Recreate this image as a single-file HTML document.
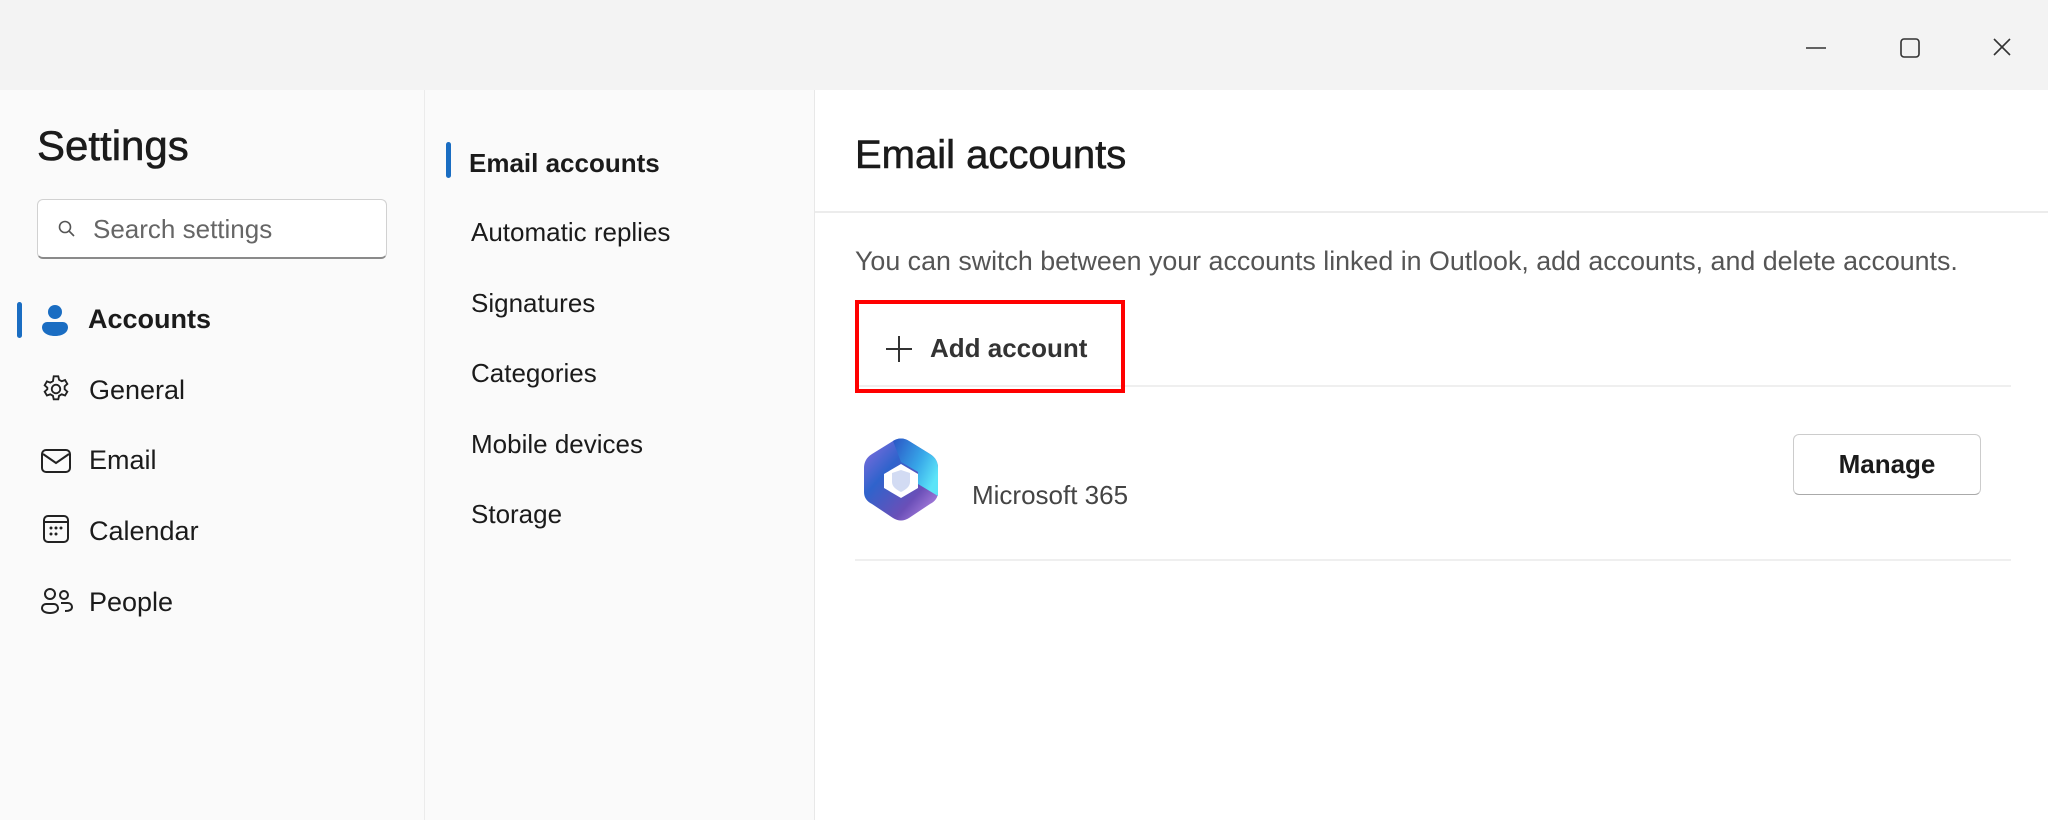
<!DOCTYPE html>
<html><head><meta charset="utf-8"><style>
*{margin:0;padding:0;box-sizing:border-box}
body{width:2048px;height:820px;overflow:hidden;font-family:"Liberation Sans",sans-serif;background:#fff;position:relative;color:#1b1b1b}
.tb{position:absolute;left:0;top:0;width:2048px;height:90px;background:#f3f3f3}
.left{position:absolute;left:0;top:90px;width:425px;height:730px;background:#fafafa;border-right:1px solid #ebebeb}
.mid{position:absolute;left:425px;top:90px;width:390px;height:730px;background:#fafafa;border-right:1px solid #e8e8e8}
.a{position:absolute;white-space:nowrap}
.nav{font-size:27px;line-height:34px}
.mnav{font-size:26px;line-height:34px;left:471px}
</style></head><body>
<div class="tb"></div>
<svg class="a" style="left:1800px;top:32px" width="220" height="30" viewBox="0 0 220 30" fill="none" stroke="#333" stroke-width="1.6">
<line x1="6" y1="16" x2="26" y2="16"/>
<rect x="101" y="7" width="18" height="18" rx="3"/>
<line x1="194" y1="7" x2="210" y2="23"/><line x1="210" y1="7" x2="194" y2="23"/>
</svg>
<div class="left"></div>
<div class="mid"></div>
<div class="a" style="left:37px;top:120px;font-size:42px;line-height:52px;-webkit-text-stroke:0.6px #1b1b1b">Settings</div>
<div class="a" style="left:37px;top:199px;width:350px;height:60px;background:#fff;border:1px solid #d1d1d1;border-bottom:2px solid #8a8a8a;border-radius:6px"></div>
<svg class="a" style="left:57px;top:219px" width="20" height="20" viewBox="0 0 20 20" fill="none" stroke="#555" stroke-width="1.6"><circle cx="8" cy="8" r="5.5"/><line x1="12" y1="12" x2="17" y2="17"/></svg>
<div class="a" style="left:93px;top:213px;font-size:26px;line-height:32px;color:#666">Search settings</div>
<div class="a" style="left:17px;top:302px;width:5px;height:36px;background:#1a6dc2;border-radius:3px"></div>
<svg class="a" style="left:40px;top:303px" width="30" height="34" viewBox="0 0 30 34"><circle cx="15" cy="9" r="7" fill="#1a6dc2"/><path d="M2 24a5 5 0 0 1 5-5h16a5 5 0 0 1 5 5c0 6-6 9-13 9S2 30 2 24z" fill="#1a6dc2"/></svg>
<div class="a nav" style="left:88px;top:302px;font-weight:700">Accounts</div>
<svg class="a" style="left:40px;top:373px" width="32" height="32" viewBox="0 0 24 24" fill="none" stroke="#222" stroke-width="1.4"><circle cx="12" cy="12" r="3.2"/><path d="M10.3 2.5h3.4l.6 2.6 2 1.1 2.5-.9 1.7 2.9-2 1.8v2.2l2 1.8-1.7 2.9-2.5-.9-2 1.1-.6 2.6h-3.4l-.6-2.6-2-1.1-2.5.9-1.7-2.9 2-1.8V11l-2-1.8 1.7-2.9 2.5.9 2-1.1z"/></svg>
<div class="a nav" style="left:89px;top:373px">General</div>
<svg class="a" style="left:40px;top:447px" width="32" height="28" viewBox="0 0 32 28" fill="none" stroke="#222" stroke-width="2"><rect x="2" y="3" width="28" height="22" rx="4"/><path d="M3 7l13 9 13-9"/></svg>
<div class="a nav" style="left:89px;top:443px">Email</div>
<svg class="a" style="left:42px;top:514px" width="28" height="30" viewBox="0 0 28 30" fill="none" stroke="#222" stroke-width="2"><rect x="2" y="2" width="24" height="26" rx="4"/><line x1="2" y1="8" x2="26" y2="8"/><g fill="#222" stroke="none"><circle cx="9" cy="14" r="1.5"/><circle cx="14" cy="14" r="1.5"/><circle cx="19" cy="14" r="1.5"/><circle cx="9" cy="20" r="1.5"/><circle cx="14" cy="20" r="1.5"/></g></svg>
<div class="a nav" style="left:89px;top:514px">Calendar</div>
<svg class="a" style="left:40px;top:587px" width="34" height="28" viewBox="0 0 34 28" fill="none" stroke="#222" stroke-width="2"><circle cx="10" cy="7" r="5"/><circle cx="24" cy="8" r="4"/><path d="M2 21a4 4 0 0 1 4-4h8a4 4 0 0 1 4 4c0 3-3 5-8 5s-8-2-8-5z"/><path d="M21 16h7a4 4 0 0 1 4 4c0 3-3 4-7 4"/></svg>
<div class="a nav" style="left:89px;top:585px">People</div>
<div class="a" style="left:446px;top:142px;width:5px;height:36px;background:#1a6dc2;border-radius:3px"></div>
<div class="a mnav" style="left:469px;top:146px;font-weight:700">Email accounts</div>
<div class="a mnav" style="top:215px">Automatic replies</div>
<div class="a mnav" style="top:286px">Signatures</div>
<div class="a mnav" style="top:356px">Categories</div>
<div class="a mnav" style="top:427px">Mobile devices</div>
<div class="a mnav" style="top:497px">Storage</div>
<div class="a" style="left:855px;top:130px;font-size:40px;line-height:50px;-webkit-text-stroke:0.6px #1b1b1b">Email accounts</div>
<div class="a" style="left:815px;top:211px;width:1233px;height:2px;background:#ececec"></div>
<div class="a" style="left:855px;top:245px;font-size:26.8px;line-height:32px;color:#555">You can switch between your accounts linked in Outlook, add accounts, and delete accounts.</div>
<div class="a" style="left:855px;top:385px;width:1156px;height:2px;background:#efefef"></div>
<div class="a" style="left:855px;top:300px;width:270px;height:93px;border:4px solid #f00"></div>
<svg class="a" style="left:884px;top:334px" width="30" height="30" viewBox="0 0 30 30" stroke="#333" stroke-width="2"><line x1="15" y1="2" x2="15" y2="28"/><line x1="2" y1="15" x2="28" y2="15"/></svg>
<div class="a" style="left:930px;top:331px;font-size:26px;line-height:34px;font-weight:700;color:#333">Add account</div>
<svg class="a" style="left:860px;top:436px" width="82" height="88" viewBox="0 0 82 88">
<defs><linearGradient id="g1" x1="0" y1="0" x2="1" y2="0.6"><stop offset="0" stop-color="#2a54c4"/><stop offset=".6" stop-color="#37a6e8"/><stop offset="1" stop-color="#5ce4f8"/></linearGradient>
<linearGradient id="g2" x1="0" y1="0" x2="1" y2="1"><stop offset="0" stop-color="#8c6ee0"/><stop offset=".35" stop-color="#2f63cc"/><stop offset=".7" stop-color="#6a4fb8"/><stop offset="1" stop-color="#c796ee"/></linearGradient></defs>
<path d="M33 5 Q41 0 49 5 L70 18 Q78 23 78 32 L78 56 Q78 64 70 68 L49 82 Q41 87 33 82 L12 68 Q4 64 4 56 L4 32 Q4 23 12 18 Z" fill="url(#g2)"/>
<path d="M33 5 Q41 0 49 5 L70 18 Q78 23 78 32 L78 60 L58 48 L58 36 L41 26 Z" fill="url(#g1)"/>
<path d="M41 28 L58 38 V52 L41 62 L24 52 V38 Z" fill="#fff"/>
<path d="M41 34 L50 37 V46 C50 51 45 54 41 56 C37 54 32 51 32 46 V37 Z" fill="#4b6fd0" opacity=".25"/>
</svg>
<div class="a" style="left:972px;top:478px;font-size:26px;line-height:34px;color:#444">Microsoft 365</div>
<div class="a" style="left:1793px;top:434px;width:188px;height:61px;border:1px solid #ccc;border-bottom-color:#aaa;border-radius:6px;background:#fff;font-size:26px;font-weight:700;line-height:58px;text-align:center">Manage</div>
<div class="a" style="left:855px;top:559px;width:1156px;height:2px;background:#efefef"></div>
</body></html>
